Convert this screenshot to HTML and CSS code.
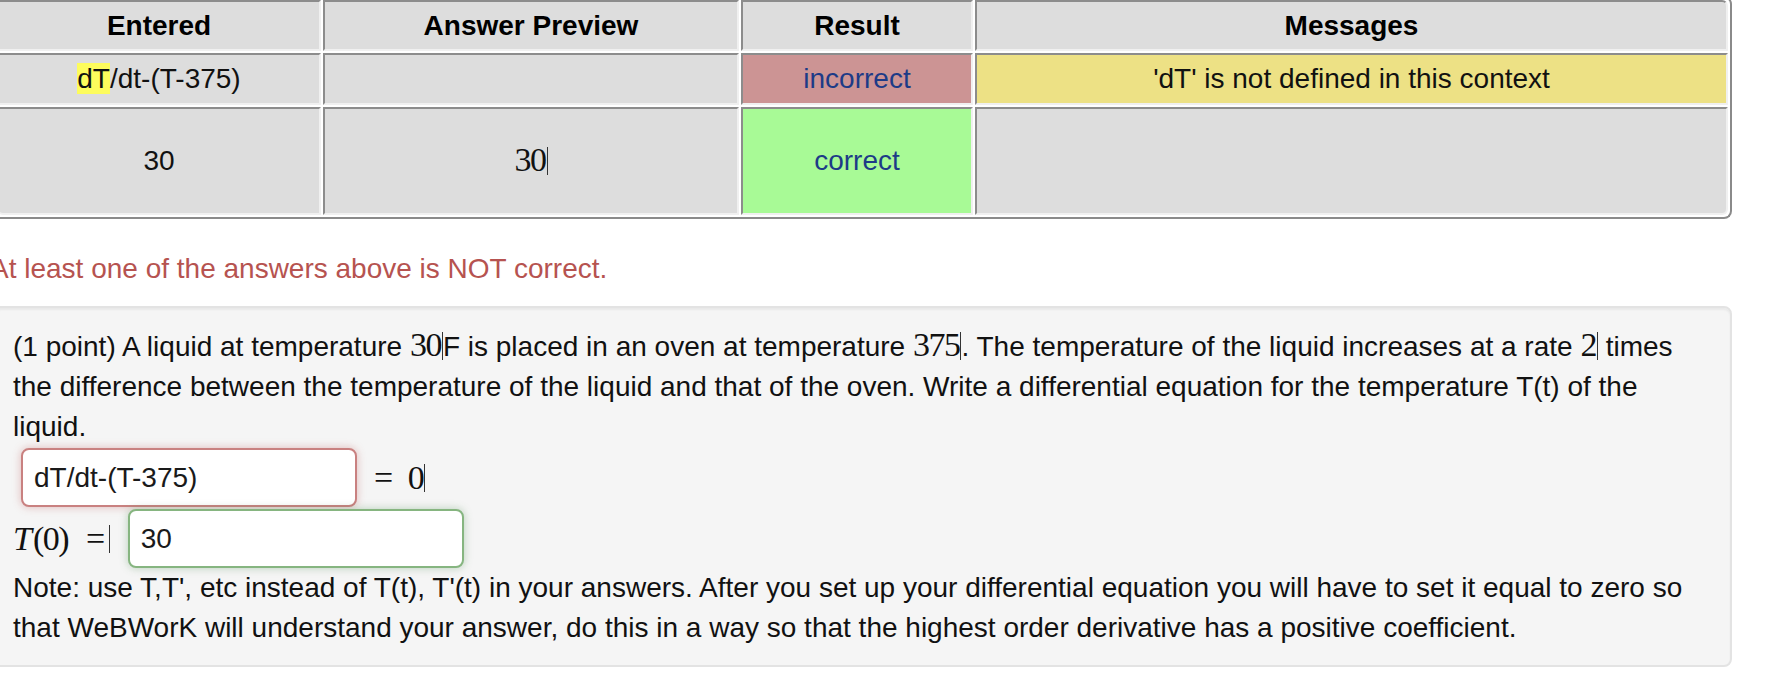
FILE: index.html
```html
<!DOCTYPE html>
<html>
<head>
<meta charset="utf-8">
<title>Attempt results</title>
<link rel="stylesheet" href="styles.css">
</head>
<body>
<div class="page">
  <table class="results">
    <tr>
      <th class="c1">Entered</th>
      <th class="c2">Answer Preview</th>
      <th class="c3">Result</th>
      <th class="c4 tr">Messages</th>
    </tr>
    <tr class="r1">
      <td><span class="hl">dT</span>/dt-(T-375)</td>
      <td></td>
      <td class="bad">incorrect</td>
      <td class="msg">'dT' is not defined in this context</td>
    </tr>
    <tr class="r2">
      <td class="bl">30</td>
      <td><span class="math">30</span><span class="caret"></span></td>
      <td class="good">correct</td>
      <td class="br"></td>
    </tr>
  </table>

  <div class="warn">At least one of the answers above is NOT correct.</div>

  <div class="problem">
    <p class="stmt">(1 point) A liquid at temperature <span class="math">30</span><span class="caret"></span>F is placed in an oven at temperature <span class="math">375</span><span class="caret"></span>. The temperature of the liquid increases at a rate <span class="math">2</span><span class="caret"></span> times the difference between the temperature of the liquid and that of the oven. Write a differential equation for the temperature T(t) of the liquid.</p>
    <div class="ansrow first">
      <input class="ans ans-bad" type="text" value="dT/dt-(T-375)">
      <span class="math eq"><span class="rel">=</span><span class="num">0</span></span><span class="caret"></span>
    </div>
    <div class="ansrow">
      <span class="math lhs"><i>T</i>(0)<span class="rel2">=</span></span><span class="caret caret-gap"></span>
      <input class="ans ans-good" type="text" value="30">
    </div>
    <p class="note">Note: use T,T', etc instead of T(t), T'(t) in your answers. After you set up your differential equation you will have to set it equal to zero so that WeBWorK will understand your answer, do this in a way so that the highest order derivative has a positive coefficient.</p>
  </div>
</div>
</body>
</html>
```

FILE: styles.css
```css
html, body {
  margin: 0;
  padding: 0;
  background: #ffffff;
}

body {
  font-family: "Liberation Sans", Arial, Helvetica, sans-serif;
  font-size: 28px;
  line-height: 40px;
  color: #111111;
  overflow: hidden;
}

.page {
  margin: -4px 0 0 -7px;
  width: 1739px;
}

/* ---------- results table ---------- */
.results {
  border-collapse: separate;
  border-spacing: 2px;
  border: 2px solid;
  border-color: #f2f2f2 #8a8a8a #8a8a8a #f2f2f2;
  border-radius: 8px;
}

.results th,
.results td {
  background: #dddddd;
  border: 2px solid;
  border-color: #8c8c8c #f0f0f0 #f0f0f0 #8c8c8c;
  padding: 0;
  text-align: center;
  vertical-align: middle;
  line-height: 40px;
}

.results th {
  font-weight: bold;
  height: 47px;
  color: #000;
}

.results .c1 { width: 320px; }
.results .c2 { width: 412px; }
.results .c3 { width: 228px; }
.results .c4 { width: 749px; }

.results .tr { border-top-right-radius: 6px; }
.results .br { border-bottom-right-radius: 6px; }
.results .bl { border-bottom-left-radius: 6px; }

.r1 td { height: 48px; }
.r2 td { height: 104px; }

.hl {
  background: #fdfc5c;
}

.bad {
  background: #cc9494 !important;
  color: #1d3b87;
}

.good {
  background: #a8fa96 !important;
  color: #1d3b87;
}

.msg {
  background: #ede185 !important;
}

/* ---------- math bits ---------- */
.math {
  font-family: "Liberation Serif", "Times New Roman", serif;
  font-size: 34px;
  letter-spacing: -1.5px;
}

.math i {
  font-style: italic;
  letter-spacing: 0;
  margin-right: 1px;
}

.caret {
  display: inline-block;
  width: 0;
  height: 28px;
  border-left: 1.5px solid #333;
  vertical-align: -4px;
  margin-left: 1px;
}

.caret-gap {
  margin-left: 5px;
}

/* ---------- warning ---------- */
.warn {
  margin: 30px 0 0 -3px;
  color: #b65350;
}

/* ---------- problem panel ---------- */
.problem {
  margin-top: 17px;
  box-sizing: border-box;
  width: 1739px;
  background: #f5f5f5;
  border: 2px solid #e3e3e3;
  border-radius: 8px;
  box-shadow: inset 0 2px 2px rgba(0, 0, 0, 0.05);
  padding: 17px 17px 17px 18px;
}

.stmt,
.note {
  margin: 0;
}

.ansrow {
  display: flex;
  align-items: center;
  height: 59px;
  margin-top: 2px;
}

.ansrow.first {
  margin-top: 1px;
}

.ans {
  box-sizing: border-box;
  width: 336px;
  height: 59px;
  border: 2px solid;
  border-radius: 8px;
  background: #ffffff;
  padding: 0 11px;
  font-family: "Liberation Sans", Arial, sans-serif;
  font-size: 28px;
  color: #1a1a1a;
  outline: none;
}

.ans-bad {
  margin-left: 8px;
  border-color: #c98180;
  box-shadow: 0 0 8px rgba(185, 74, 72, 0.35);
}

.ans-good {
  margin-left: 18px;
  border-color: #86b580;
  box-shadow: 0 0 8px rgba(70, 136, 71, 0.35);
}

.eq {
  margin-left: 17px;
}

.eq .num {
  margin-left: 16px;
}

.lhs .rel2 {
  margin-left: 18px;
}
```
